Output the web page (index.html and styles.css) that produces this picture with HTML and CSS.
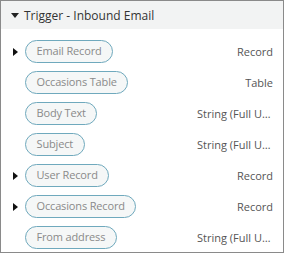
FILE: index.html
```html
<!DOCTYPE html>
<html lang="en">
<head>
    <meta charset="UTF-8">
    <title>Trigger - Inbound Email</title>
    <link rel="stylesheet" href="styles.css">
</head>
<body>
    <div class="panel">
        <div class="panel-header">
            <span class="caret caret-down"></span>
            <span class="panel-title">Trigger - Inbound Email</span>
        </div>
        <div class="field-list">
            <div class="field-row">
                <span class="caret caret-right"></span>
                <span class="pill">Email Record</span>
                <span class="field-type">Record</span>
            </div>
            <div class="field-row">
                <span class="caret"></span>
                <span class="pill">Occasions Table</span>
                <span class="field-type">Table</span>
            </div>
            <div class="field-row">
                <span class="caret"></span>
                <span class="pill">Body Text</span>
                <span class="field-type">String (Full Unicode)</span>
            </div>
            <div class="field-row">
                <span class="caret"></span>
                <span class="pill">Subject</span>
                <span class="field-type">String (Full Unicode)</span>
            </div>
            <div class="field-row">
                <span class="caret caret-right"></span>
                <span class="pill">User Record</span>
                <span class="field-type">Record</span>
            </div>
            <div class="field-row">
                <span class="caret caret-right"></span>
                <span class="pill">Occasions Record</span>
                <span class="field-type">Record</span>
            </div>
            <div class="field-row">
                <span class="caret"></span>
                <span class="pill">From address</span>
                <span class="field-type">String (Full Unicode)</span>
            </div>
        </div>
    </div>
</body>
</html>
```

FILE: styles.css
```css
body {
    margin: 0;
    font-family: "Open Sans", Arial, sans-serif;
    background-color: #fff;
}

.panel {
    box-sizing: border-box;
    width: 284px;
    height: 253px;
    border: 1px solid #8a8a8a;
    background-color: #fff;
}

.panel-header {
    display: flex;
    align-items: center;
    height: 28px;
    padding-left: 10px;
    background-color: #f2f3f3;
}

.panel-title {
    margin-left: 5px;
    font-size: 12px;
    color: #333;
}

.caret {
    display: inline-block;
    width: 8px;
    height: 8px;
}

.caret-down {
    width: 0;
    height: 0;
    border-left: 4px solid transparent;
    border-right: 4px solid transparent;
    border-top: 5px solid #222;
}

.caret-right {
    width: 0;
    height: 0;
    border-top: 4px solid transparent;
    border-bottom: 4px solid transparent;
    border-left: 5px solid #111;
}

.field-list {
    display: flex;
    flex-direction: column;
    gap: 8px;
    padding: 11px 10px 0 12px;
}

.field-row {
    display: grid;
    grid-template-columns: 12px auto 1fr;
    align-items: center;
    height: 23px;
}

.pill {
    box-sizing: border-box;
    height: 23px;
    line-height: 20px;
    padding: 0 10.5px;
    border: 1.5px solid #6fa9bd;
    border-radius: 12px;
    background-color: #f5f7f7;
    color: #8a8a8a;
    font-size: 11px;
    letter-spacing: -0.15px;
    white-space: nowrap;
}

.field-type {
    justify-self: end;
    max-width: 76px;
    overflow: hidden;
    white-space: nowrap;
    text-overflow: ellipsis;
    font-size: 11px;
    color: #555;
}
```
